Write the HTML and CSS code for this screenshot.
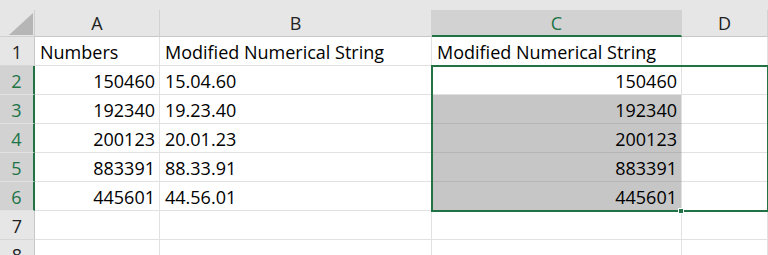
FILE: index.html
```html
<!DOCTYPE html>
<html lang="en">
<head>
    <meta charset="UTF-8">
    <title>Modified Numerical String</title>
    <link rel="stylesheet" href="styles.css">
</head>
<body>
    <div class="sheet">
        <!-- column headers -->
        <div class="corner"><div class="tri"></div></div>
        <div class="colhead">A</div>
        <div class="colhead">B</div>
        <div class="colhead sel">C</div>
        <div class="colhead">D</div>

        <!-- rows -->
        <div class="rowhead">1</div>
        <div class="cell">Numbers</div>
        <div class="cell">Modified Numerical String</div>
        <div class="cell">Modified Numerical String</div>
        <div class="cell"></div>

        <div class="rowhead sel">2</div>
        <div class="cell num">150460</div>
        <div class="cell">15.04.60</div>
        <div class="cell num">150460</div>
        <div class="cell"></div>

        <div class="rowhead sel">3</div>
        <div class="cell num">192340</div>
        <div class="cell">19.23.40</div>
        <div class="cell num shade">192340</div>
        <div class="cell"></div>

        <div class="rowhead sel">4</div>
        <div class="cell num">200123</div>
        <div class="cell">20.01.23</div>
        <div class="cell num shade">200123</div>
        <div class="cell"></div>

        <div class="rowhead sel">5</div>
        <div class="cell num">883391</div>
        <div class="cell">88.33.91</div>
        <div class="cell num shade">883391</div>
        <div class="cell"></div>

        <div class="rowhead sel">6</div>
        <div class="cell num">445601</div>
        <div class="cell">44.56.01</div>
        <div class="cell num shade last">445601<span class="fill-mark"></span></div>
        <div class="cell"></div>

        <div class="rowhead">7</div>
        <div class="cell"></div>
        <div class="cell"></div>
        <div class="cell"></div>
        <div class="cell"></div>

        <div class="rowhead">8</div>
        <div class="cell"></div>
        <div class="cell"></div>
        <div class="cell"></div>
        <div class="cell"></div>

        <!-- selection frame C2:C6 -->
        <div class="selection"></div>
    </div>
</body>
</html>
```

FILE: styles.css
```css
* {
    box-sizing: border-box;
}

body {
    margin: 0;
    padding-top: 10px;
    background-color: #e6e6e6;
    font-family: 'Open Sans', 'Liberation Sans', sans-serif;
    font-size: 18px;
    line-height: 20px;
    color: #000;
    overflow: hidden;
    height: 255px;
}

.sheet {
    display: grid;
    grid-template-columns: 35px 125px 272px 250px 1fr;
    grid-template-rows: 27px repeat(8, 29px);
    background-color: #fff;
    position: relative;
}

/* corner with the select-all triangle */
.corner {
    background-color: #e6e6e6;
    border-right: 1px solid #d0d0d0;
    border-bottom: 1px solid #d0d0d0;
    display: flex;
    align-items: flex-end;
    justify-content: flex-end;
    padding: 0 1px 1px 0;
}

.tri {
    width: 24px;
    height: 22px;
    background-color: #b6b6b6;
    clip-path: polygon(100% 0, 100% 100%, 0 100%);
}

.colhead, .rowhead {
    background-color: #e6e6e6;
    color: #222;
    display: flex;
    align-items: flex-end;
    justify-content: center;
    padding-bottom: 3px;
}

.colhead {
    border-right: 1px solid #d2d2d2;
    border-bottom: 1px solid #c8c8c8;
}

.colhead.sel {
    background-color: #d2d2d2;
    color: #217346;
    border-bottom: 2px solid #217346;
    padding-bottom: 2px;
}

.rowhead {
    border-right: 1px solid #c8c8c8;
    border-bottom: 1px solid #d6d6d6;
}

.rowhead.sel {
    background-color: #d2d2d2;
    color: #217346;
    border-right: 2px solid #217346;
    border-bottom-color: #e2e2e2;
}

.cell {
    border-right: 1px solid #e1e1e1;
    border-bottom: 1px solid #e1e1e1;
    display: flex;
    align-items: flex-end;
    padding: 0 4px 3px 5px;
    white-space: nowrap;
    overflow: hidden;
}

.cell.num {
    justify-content: flex-end;
}

.cell.shade {
    background-color: #c6c6c6;
    border-bottom-color: #b5b5b5;
}

/* last selected cell carries the fill mark */
.cell.last {
    position: relative;
    overflow: visible;
}

.fill-mark {
    position: absolute;
    right: -3px;
    bottom: -4px;
    width: 6px;
    height: 6px;
    background-color: #217346;
    border: 1px solid #fff;
    z-index: 3;
}

/* selection frame, drawn over the grid area of C2:C6 */
.selection {
    grid-column: 4;
    grid-row: 3 / 8;
    position: absolute;
    inset: -1px -1px -1px -1px;
    border: 2px solid #217346;
    pointer-events: none;
    z-index: 2;
}
```
